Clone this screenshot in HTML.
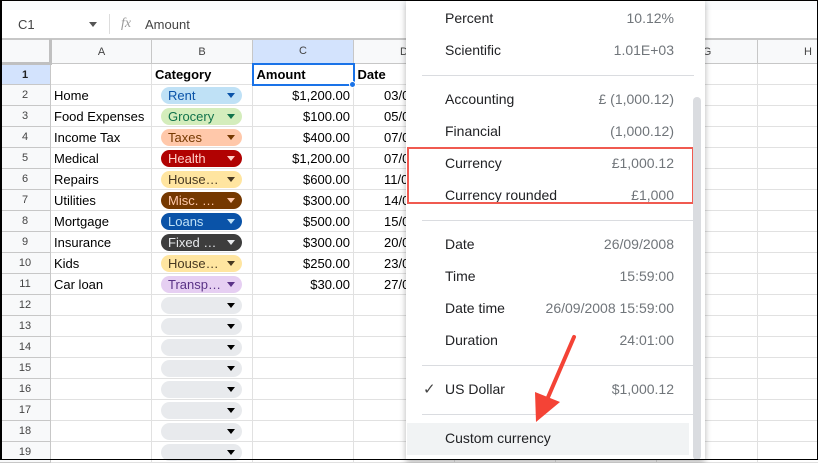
<!DOCTYPE html>
<html><head><style>
*{margin:0;padding:0;box-sizing:border-box}
body{width:818px;height:460px;overflow:hidden;background:#fff;font-family:"Liberation Sans",Arial,sans-serif;position:relative}
.frame{position:absolute;inset:0;border:1px solid #000;border-left-width:2px;z-index:50;pointer-events:none}
.top{position:absolute;left:0;top:0;width:818px;height:10px;background:#f9fbfd}
.fbar{position:absolute;left:0;top:10px;width:818px;height:29px;background:#fff;border-bottom:1px solid #c7c7c7;font-size:13px;color:#444}
table{position:absolute;left:-1px;top:39px;border-collapse:collapse;table-layout:fixed;width:858px}
td{border:1px solid #e1e1e1;height:21px;font-size:13px;color:#000;padding:0 3px;white-space:nowrap;overflow:hidden}
tr.h td{height:24px;background:#f8f9fa;text-align:center;color:#444;font-size:11px;border-color:#c7c7c7}
td.rh{background:#f8f9fa;text-align:center;color:#444;font-size:11px;border-color:#c7c7c7;padding:0}
.chip{display:block;width:81px;height:17px;border-radius:9px;margin-left:6px;font-size:13px;line-height:17px;padding-left:7px;position:relative}
.chip:after{content:"";position:absolute;right:7px;top:6px;border-left:4px solid transparent;border-right:4px solid transparent;border-top:5px solid currentColor}
.r{text-align:right}
.d{text-align:right;padding-right:0}
.menu{position:absolute;left:406px;top:0;width:299px;height:460px;background:#fff;box-shadow:0 2px 6px rgba(0,0,0,.3);z-index:10;font-size:14px;color:#202124}
.it{position:absolute;left:39px;width:229px;height:20px;line-height:20px}
.it span{position:absolute;right:0;top:0;line-height:20px;color:#70757a;font-size:14px}
.sep{position:absolute;left:16px;width:272px;height:1px;background:#dadce0}
</style></head><body>
<div class="top"></div>
<div class="fbar">
 <span style="position:absolute;left:18px;top:7px">C1</span>
 <span style="position:absolute;left:89px;top:12px;border-left:4px solid transparent;border-right:4px solid transparent;border-top:5px solid #555"></span>
 <span style="position:absolute;left:109px;top:4px;width:1px;height:20px;background:#ddd"></span>
 <span style="position:absolute;left:121px;top:6px;font-style:italic;font-family:'Liberation Serif',serif;color:#999;font-size:14px">fx</span>
 <span style="position:absolute;left:145px;top:7px">Amount</span>
</div>
<table>
<colgroup><col style="width:51px"><col style="width:101px"><col style="width:101px"><col style="width:101px"><col style="width:101px"><col style="width:101px"><col style="width:101px"><col style="width:101px"><col style="width:101px"></colgroup>
<tr class="h"><td style="background:#f8f9fa;border-right:3px solid #c0c0c0;border-bottom:3px solid #c0c0c0"></td><td>A</td><td>B</td><td style="background:#d3e3fd">C</td><td>D</td><td>E</td><td>F</td><td>G</td><td>H</td></tr>
<tr><td class="rh" style="background:#d3e3fd;font-weight:bold;color:#222">1</td><td></td><td style="font-weight:bold">Category</td><td style="font-weight:bold;border:2px solid #1a73e8">Amount</td><td style="font-weight:bold">Date</td><td></td><td></td><td></td><td></td></tr>
<tr><td class="rh">2</td><td>Home</td><td><span class="chip" style="background:#bfe1f6;color:#0a53a8">Rent</span></td><td class="r">$1,200.00</td><td style="padding-left:30px">03/01/2023</td><td></td><td></td><td></td><td></td></tr>
<tr><td class="rh">3</td><td>Food Expenses</td><td><span class="chip" style="background:#d4edbc;color:#11734b">Grocery</span></td><td class="r">$100.00</td><td style="padding-left:30px">05/01/2023</td><td></td><td></td><td></td><td></td></tr>
<tr><td class="rh">4</td><td>Income Tax</td><td><span class="chip" style="background:#ffc8aa;color:#753800">Taxes</span></td><td class="r">$400.00</td><td style="padding-left:30px">07/01/2023</td><td></td><td></td><td></td><td></td></tr>
<tr><td class="rh">5</td><td>Medical</td><td><span class="chip" style="background:#b10202;color:#ffcfc9">Health</span></td><td class="r">$1,200.00</td><td style="padding-left:30px">07/01/2023</td><td></td><td></td><td></td><td></td></tr>
<tr><td class="rh">6</td><td>Repairs</td><td><span class="chip" style="background:#ffe5a0;color:#473821">House…</span></td><td class="r">$600.00</td><td style="padding-left:30px">11/01/2023</td><td></td><td></td><td></td><td></td></tr>
<tr><td class="rh">7</td><td>Utilities</td><td><span class="chip" style="background:#753800;color:#ffc8aa">Misc. …</span></td><td class="r">$300.00</td><td style="padding-left:30px">14/01/2023</td><td></td><td></td><td></td><td></td></tr>
<tr><td class="rh">8</td><td>Mortgage</td><td><span class="chip" style="background:#0a53a8;color:#bfe1f6">Loans</span></td><td class="r">$500.00</td><td style="padding-left:30px">15/01/2023</td><td></td><td></td><td></td><td></td></tr>
<tr><td class="rh">9</td><td>Insurance</td><td><span class="chip" style="background:#3d3d3d;color:#e8eaed">Fixed …</span></td><td class="r">$300.00</td><td style="padding-left:30px">20/01/2023</td><td></td><td></td><td></td><td></td></tr>
<tr><td class="rh">10</td><td>Kids</td><td><span class="chip" style="background:#ffe5a0;color:#473821">House…</span></td><td class="r">$250.00</td><td style="padding-left:30px">23/01/2023</td><td></td><td></td><td></td><td></td></tr>
<tr><td class="rh">11</td><td>Car loan</td><td><span class="chip" style="background:#e6cff2;color:#5a3286">Transp…</span></td><td class="r">$30.00</td><td style="padding-left:30px">27/01/2023</td><td></td><td></td><td></td><td></td></tr>
<tr><td class="rh">12</td><td></td><td><span class="chip" style="background:#e8eaed;color:#000"></span></td><td></td><td></td><td></td><td></td><td></td><td></td></tr>
<tr><td class="rh">13</td><td></td><td><span class="chip" style="background:#e8eaed;color:#000"></span></td><td></td><td></td><td></td><td></td><td></td><td></td></tr>
<tr><td class="rh">14</td><td></td><td><span class="chip" style="background:#e8eaed;color:#000"></span></td><td></td><td></td><td></td><td></td><td></td><td></td></tr>
<tr><td class="rh">15</td><td></td><td><span class="chip" style="background:#e8eaed;color:#000"></span></td><td></td><td></td><td></td><td></td><td></td><td></td></tr>
<tr><td class="rh">16</td><td></td><td><span class="chip" style="background:#e8eaed;color:#000"></span></td><td></td><td></td><td></td><td></td><td></td><td></td></tr>
<tr><td class="rh">17</td><td></td><td><span class="chip" style="background:#e8eaed;color:#000"></span></td><td></td><td></td><td></td><td></td><td></td><td></td></tr>
<tr><td class="rh">18</td><td></td><td><span class="chip" style="background:#e8eaed;color:#000"></span></td><td></td><td></td><td></td><td></td><td></td><td></td></tr>
<tr><td class="rh">19</td><td></td><td><span class="chip" style="background:#e8eaed;color:#000"></span></td><td></td><td></td><td></td><td></td><td></td><td></td></tr>
</table>
<div style="position:absolute;left:349px;top:81px;width:7px;height:7px;border-radius:50%;background:#1a73e8;border:1px solid #fff;z-index:5"></div>
<div class="menu">
 <div class="it" style="top:8px">Percent<span>10.12%</span></div>
 <div class="it" style="top:40px">Scientific<span>1.01E+03</span></div>
 <div class="sep" style="top:75px"></div>
 <div class="it" style="top:89px">Accounting<span>£ (1,000.12)</span></div>
 <div class="it" style="top:121px">Financial<span>(1,000.12)</span></div>
 <div class="it" style="top:153px">Currency<span>£1,000.12</span></div>
 <div class="it" style="top:185px">Currency rounded<span>£1,000</span></div>
 <div style="position:absolute;left:1px;top:147px;width:287px;height:57px;border:2px solid #f05a50"></div>
 <div class="sep" style="top:220px"></div>
 <div class="it" style="top:234px">Date<span>26/09/2008</span></div>
 <div class="it" style="top:266px">Time<span>15:59:00</span></div>
 <div class="it" style="top:298px">Date time<span>26/09/2008 15:59:00</span></div>
 <div class="it" style="top:330px">Duration<span>24:01:00</span></div>
 <div class="sep" style="top:365px"></div>
 <div style="position:absolute;left:17px;top:380px;font-size:15px;color:#444">✓</div>
 <div class="it" style="top:379px">US Dollar<span>$1,000.12</span></div>
 <div class="sep" style="top:414px"></div>
 <div style="position:absolute;left:1px;top:423px;width:282px;height:32px;background:#f1f3f4"></div>
 <div class="it" style="top:428px">Custom currency</div>
 <div style="position:absolute;left:287px;top:97px;width:8px;height:363px;border-radius:4px;background:#dadce0"></div>
 <svg style="position:absolute;left:110px;top:330px" width="70" height="100"><line x1="58" y1="7" x2="30" y2="72" stroke="#f44336" stroke-width="4" stroke-linecap="round"/><polygon points="19,62 44,72 20,92" fill="#f44336"/></svg>
</div>
<div class="frame"></div>
</body></html>
